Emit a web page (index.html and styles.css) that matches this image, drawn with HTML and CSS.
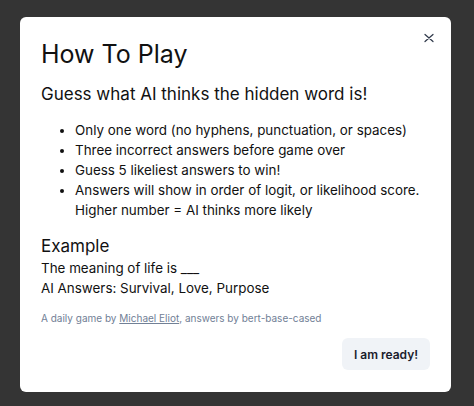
FILE: index.html
```html
<!DOCTYPE html>
<html>
<head>
<meta charset="utf-8">
<link rel="stylesheet" href="styles.css">
</head>
<body>
<div class="overlay">
  <div class="modal">
    <button class="close" aria-label="Close">
      <svg width="10" height="10" viewBox="0 0 10 10"><path d="M1 1.5L9 8.5M9 1.5L1 8.5" stroke="#2d3748" stroke-width="1.2" stroke-linecap="round"/></svg>
    </button>
    <h1 class="title">How To Play</h1>
    <p class="lead">Guess what AI thinks the hidden word is!</p>
    <ul class="rules">
      <li>Only one word (no hyphens, punctuation, or spaces)</li>
      <li>Three incorrect answers before game over</li>
      <li>Guess 5 likeliest answers to win!</li>
      <li>Answers will show in order of logit, or likelihood score. Higher number = AI thinks more likely</li>
    </ul>
    <h2 class="example-title">Example</h2>
    <p class="example">The meaning of life is ___</p>
    <p class="example">AI Answers: Survival, Love, Purpose</p>
    <p class="credit">A daily game by <a href="#">Michael Eliot</a>, answers by bert-base-cased</p>
    <div class="footer">
      <button class="ready">I am ready!</button>
    </div>
  </div>
</div>
</body>
</html>
```
FILE: styles.css
```css
html, body {
  margin: 0;
  padding: 0;
  background: #343434;
  font-family: Inter, "Noto Sans", sans-serif;
  color: #1a202c;
}
.overlay {
  width: 474px;
  height: 406px;
  padding: 17px 23px 0 20px;
  box-sizing: border-box;
}
.modal {
  position: relative;
  background: #fff;
  border-radius: 6px;
  width: 431px;
  height: 375px;
  box-sizing: border-box;
  padding: 22px 21px 0 21px;
}
.close {
  position: absolute;
  top: 15px;
  right: 16px;
  width: 12px;
  height: 12px;
  padding: 0;
  border: 0;
  background: none;
  display: flex;
  align-items: center;
  justify-content: center;
}
.title {
  margin: 0;
  font-size: 25px;
  line-height: 30px;
  font-weight: 400;
  color: #111;
}
.lead {
  margin: 13px 0 0;
  font-size: 17px;
  line-height: 24px;
  color: #111;
}
.rules {
  margin: 14px 0 0;
  padding-left: 34px;
  font-size: 13.4px;
  line-height: 20px;
  color: #111;
}
.example-title {
  margin: 15px 0 0;
  font-size: 17px;
  line-height: 23px;
  font-weight: 400;
  color: #111;
}
.example {
  margin: 0;
  font-size: 13.4px;
  line-height: 20px;
  color: #111;
}
.credit {
  margin: 13px 0 0;
  font-size: 10px;
  line-height: 14px;
  color: #718096;
}
.credit a {
  color: #718096;
}
.footer {
  display: flex;
  justify-content: flex-end;
  margin-top: 13px;
}
.ready {
  width: 88px;
  height: 32px;
  border: 0;
  border-radius: 6px;
  background: #f0f3f7;
  font-family: Inter, sans-serif;
  font-size: 12px;
  font-weight: 600;
  color: #1a202c;
}
```
